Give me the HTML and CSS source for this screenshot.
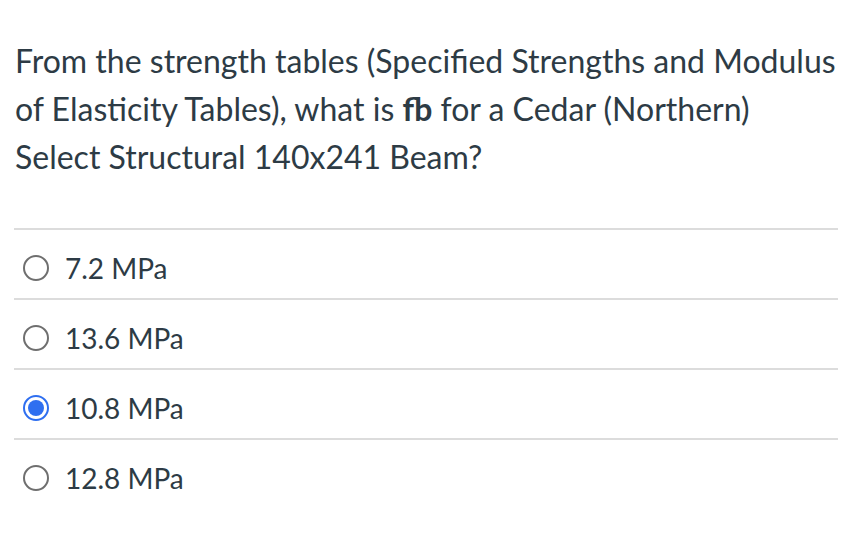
FILE: index.html
```html
<!DOCTYPE html>
<html>
<head>
<meta charset="utf-8">
<link rel="stylesheet" href="styles.css">
</head>
<body>
<div class="quiz">
  <div class="question">From the strength tables (Specified Strengths and Modulus of Elasticity Tables), what is <strong>fb</strong> for a Cedar (Northern) Select Structural 140x241 Beam?</div>
  <div class="answers">
    <div class="answer"><span class="radio"></span><span class="label">7.2 MPa</span></div>
    <div class="answer"><span class="radio"></span><span class="label">13.6 MPa</span></div>
    <div class="answer"><span class="radio checked"></span><span class="label">10.8 MPa</span></div>
    <div class="answer"><span class="radio"></span><span class="label">12.8 MPa</span></div>
  </div>
</div>
</body>
</html>
```
FILE: styles.css
```css
html, body {
  margin: 0;
  padding: 0;
  background: #ffffff;
}
.quiz {
  width: 824px;
  padding: 37px 0 0 14px;
  font-family: Lato, "Noto Sans", sans-serif;
  color: #2d3b45;
}
.question {
  font-size: 32px;
  line-height: 48px;
  padding-left: 1px;
}
.question strong {
  font-weight: 700;
}
.answers {
  margin-top: 47px;
}
.answer {
  border-top: 2px solid #dcdcdc;
  height: 68px;
  display: flex;
  align-items: center;
  padding-top: 8px;
  box-sizing: content-box;
  height: 60px;
}
.radio {
  width: 22px;
  height: 22px;
  border: 2px solid #6f6f6f;
  border-radius: 50%;
  margin-left: 9px;
  margin-right: 16px;
  box-sizing: content-box;
  flex: none;
  position: relative;
}
.radio.checked {
  border-color: #2f6ff0;
}
.radio.checked::after {
  content: "";
  position: absolute;
  left: 3px;
  top: 3px;
  width: 16px;
  height: 16px;
  border-radius: 50%;
  background: #2f6ff0;
}
.label {
  font-size: 28px;
  line-height: 32px;
}
```
